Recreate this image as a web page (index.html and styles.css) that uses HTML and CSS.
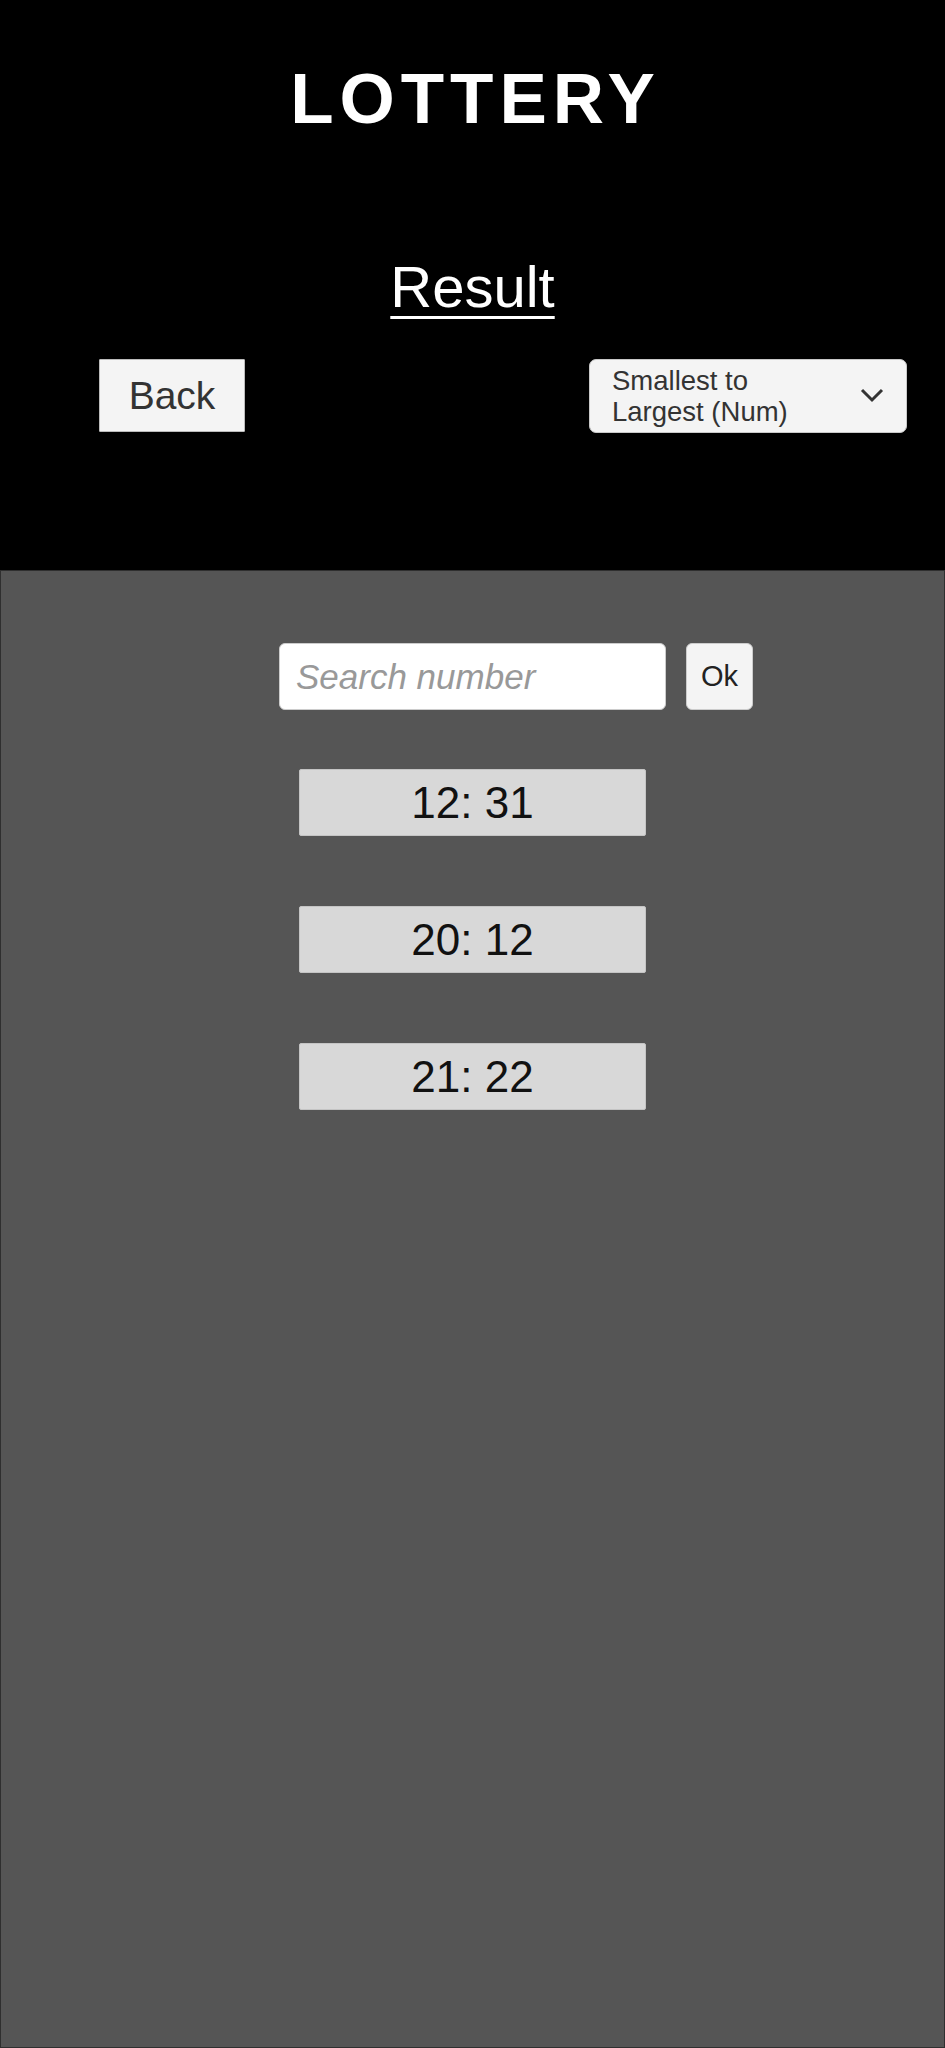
FILE: index.html
```html
<!DOCTYPE html>
<html>
<head>
<meta charset="utf-8">
<link rel="stylesheet" href="styles.css">
</head>
<body>
<header class="top">
  <h1 class="brand">LOTTERY</h1>
  <h2 class="heading">Result</h2>
  <div class="controls">
    <button class="back">Back</button>
    <div class="dropdown">
      <span class="dropdown-label">Smallest to<br>Largest (Num)</span>
      <svg class="chevron" width="24" height="16" viewBox="0 0 24 16"><path d="M2 3 L12 13 L22 3" fill="none" stroke="#333" stroke-width="3"/></svg>
    </div>
  </div>
</header>
<main class="panel">
  <div class="search">
    <input class="search-input" type="text" placeholder="Search number">
    <button class="ok">Ok</button>
  </div>
  <ul class="results">
    <li class="result">12: 31</li>
    <li class="result">20: 12</li>
    <li class="result">21: 22</li>
  </ul>
</main>
</body>
</html>
```
FILE: styles.css
```css
* { box-sizing: border-box; }
html, body { margin: 0; padding: 0; background: #000; }
body { font-family: "Liberation Sans", Arial, sans-serif; width: 945px; height: 2048px; overflow: hidden; }

.top { height: 570px; padding-top: 63px; display: flex; flex-direction: column; }
.brand { margin: 0; text-align: center; color: #fff; font-size: 71px; line-height: 1; font-weight: 700; letter-spacing: 6px; padding-left: 6px; }
.heading { margin: 124px 0 0; text-align: center; color: #fff; font-size: 58px; line-height: 1; font-weight: 400; text-decoration: underline; text-decoration-thickness: 3px; text-underline-offset: 9px; }
.controls { margin-top: 43px; display: flex; justify-content: space-between; align-items: flex-start; padding: 0 38px 0 99px; }
.back { width: 146px; height: 73px; background: #f4f4f4; border: 1px solid #bbb; border-radius: 1px; color: #333; font-family: inherit; font-size: 39px; padding: 0; }
.dropdown { width: 318px; height: 74px; background: #f4f4f4; border: 1px solid #c8c8c8; border-radius: 7px; display: flex; align-items: center; justify-content: space-between; padding: 0 22px 0 22px; }
.dropdown-label { color: #333; font-size: 27.5px; line-height: 31px; }
.chevron { display: block; margin-top: -2px; }

.panel { height: 1478px; background: #555; border: 1px solid #2f2f2f; padding-top: 72px; }
.search { display: flex; gap: 20px; padding-left: 278px; }
.search-input { width: 387px; height: 67px; border: 1px solid #ccc; border-radius: 6px; background: #fff; font-family: inherit; font-size: 35px; font-style: italic; padding: 0 16px; color: #222; }
.search-input::placeholder { color: #999; }
.ok { width: 67px; height: 67px; border: 1px solid #ccc; border-radius: 6px; background: #f4f4f4; font-family: inherit; font-size: 29px; color: #222; padding: 0; }

.results { list-style: none; margin: 59px 0 0; padding: 0; display: flex; flex-direction: column; align-items: center; gap: 70px; }
.result { width: 347px; height: 67px; background: #d8d8d8; border-radius: 2px; border: 1px solid #c4c4c4; color: #111; font-size: 44px; display: flex; align-items: center; justify-content: center; }
```
